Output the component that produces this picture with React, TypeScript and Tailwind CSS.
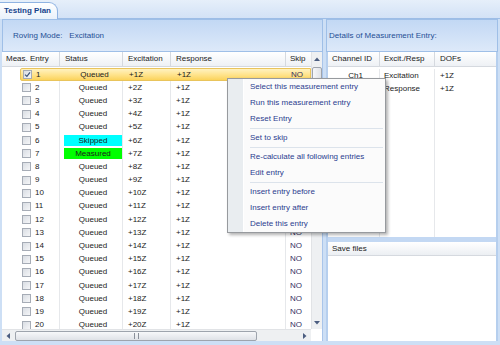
import React from "react";

type Entry = { id: number; status: string };

const entries: Entry[] = Array.from({ length: 20 }, (_, i) => ({
  id: i + 1,
  status: i === 5 ? "Skipped" : i === 6 ? "Measured" : "Queued",
}));

const menuGroups = [
  ["Select this measurement entry", "Run this measurement entry", "Reset Entry"],
  ["Set to skip"],
  ["Re-calculate all following entries", "Edit entry"],
  ["Insert entry before", "Insert entry after", "Delete this entry"],
];

function Checkbox({ checked }: { checked?: boolean }) {
  return (
    <div className="w-[9px] h-[9px] border border-[#a6acb6] bg-gradient-to-br from-[#d9dde3] to-[#f5f6f8] flex items-center justify-center">
      {checked && (
        <svg width="7" height="7" viewBox="0 0 7 7">
          <path d="M1 3.6 L2.9 5.4 L6 1.3" stroke="#3e5478" strokeWidth="1.2" fill="none" />
        </svg>
      )}
    </div>
  );
}

function Arrow({ dir }: { dir: "up" | "down" | "left" | "right" }) {
  const d =
    dir === "up"
      ? "M1 5 L4 1.5 L7 5 Z"
      : dir === "down"
      ? "M1 2 L4 5.5 L7 2 Z"
      : dir === "left"
      ? "M5 1 L1.5 4 L5 7 Z"
      : "M2 1 L5.5 4 L2 7 Z";
  return (
    <svg width="8" height="8" viewBox="0 0 8 8">
      <path d={d} fill="#4b5d80" />
    </svg>
  );
}

function EntryRow({ e }: { e: Entry }) {
  const sel = e.id === 1;
  const line = sel ? "" : "border-r border-[#e6e8eb]";
  const statusBg =
    e.status === "Skipped" ? "bg-[#00ffff]" : e.status === "Measured" ? "bg-[#00ff00]" : "";
  return (
    <div className="flex h-[13.2px] pl-[18px]">
      <div
        className={`flex flex-1 ${
          sel
            ? "rounded-l-[2px] border border-[#e9c45c] bg-gradient-to-b from-[#fff2c0] via-[#ffe48e] to-[#fbd35a]"
            : ""
        }`}
      >
        <div className={`w-[40px] flex items-center pl-[2px] gap-[4px] ${line}`}>
          <Checkbox checked={sel} />
          <span>{e.id}</span>
        </div>
        <div className={`w-[63px] flex items-center pl-[4px] ${line}`}>
          <div className={`w-full h-[11px] flex items-center justify-center ${statusBg}`}>
            {e.status}
          </div>
        </div>
        <div className={`w-[48px] flex items-center pl-[5px] ${line}`}>+{e.id}Z</div>
        <div className={`w-[115px] flex items-center pl-[5px] ${line}`}>+1Z</div>
        <div className="flex-1 flex items-center pl-[4px] text-[#35305f]">NO</div>
      </div>
    </div>
  );
}

function DetailRow({ ch, kind }: { ch: string; kind: string }) {
  return (
    <div className="flex h-[13.2px]">
      <div className="w-[52px] flex items-center justify-center pl-[4px] border-r border-[#e6e8eb]">{ch}</div>
      <div className="w-[55px] flex items-center pl-[4px] border-r border-[#e6e8eb]">{kind}</div>
      <div className="flex-1 flex items-center pl-[5px]">+1Z</div>
    </div>
  );
}

export default function App() {
  return (
    <div className="relative w-[500px] h-[345px] overflow-hidden bg-[#cddff5] text-[8px] leading-none text-[#1b1b1b] font-['Liberation_Sans',Arial,sans-serif]">
      {/* tab strip */}
      <div className="h-[19px] flex items-end bg-gradient-to-b from-[#e6effa] to-[#d3e2f6] border-b border-[#9dbde6]">
        <div className="h-[17px] w-[58px] pl-[4px] flex items-center rounded-tr-[9px] border-t border-r border-[#8fb3e2] bg-gradient-to-b from-white to-[#e9f1fb] font-bold text-[#15428b] -mb-px">
          Testing Plan
        </div>
      </div>

      <div className="flex h-[322px] px-[2px]">
        {/* left panel */}
        <div className="w-[321px] flex flex-col">
          <div className="h-[33px] flex items-center gap-[7px] pl-[10px] border border-[#9fbfe7] bg-gradient-to-b from-[#c2d8f4] to-[#dde9f9] text-[#1f4f95]">
            <span>Roving Mode:</span>
            <span>Excitation</span>
          </div>
          <div className="flex flex-1 min-h-0 bg-white border-r border-[#a9c5ea]">
            <div className="w-[309px] flex flex-col">
              <div className="h-[15px] flex border-b border-[#d5d9df] bg-gradient-to-b from-white to-[#eef1f5]">
                <div className="w-[58px] flex items-center pl-[4px] border-r border-[#d5d9df]">Meas. Entry</div>
                <div className="w-[63px] flex items-center pl-[5px] border-r border-[#d5d9df]">Status</div>
                <div className="w-[48px] flex items-center pl-[5px] border-r border-[#d5d9df]">Excitation</div>
                <div className="w-[115px] flex items-center pl-[5px] border-r border-[#d5d9df]">Response</div>
                <div className="flex-1 flex items-center pl-[4px]">Skip</div>
              </div>
              <div className="flex-1 overflow-hidden pt-[1px]">
                {entries.map((e) => (
                  <EntryRow key={e.id} e={e} />
                ))}
              </div>
            </div>
            {/* vertical scrollbar */}
            <div className="w-[11px] flex flex-col items-center bg-[#eef0f2] border-l border-[#e1e3e6]">
              <div className="h-[15px] flex items-center">
                <Arrow dir="up" />
              </div>
              <div className="w-[10px] h-[34px] rounded-[2px] border border-[#9ea4ad] bg-gradient-to-r from-[#f6f7f9] to-[#dfe2e7]" />
              <div className="flex-1" />
              <div className="h-[13px] flex items-center">
                <Arrow dir="down" />
              </div>
            </div>
          </div>
          {/* horizontal scrollbar */}
          <div className="h-[12px] flex bg-white border-r border-[#a9c5ea]">
            <div className="w-[309px] flex items-center bg-[#eef0f2] border-t border-[#e1e3e6]">
              <div className="w-[13px] flex justify-center">
                <Arrow dir="left" />
              </div>
              <div className="w-[242px] h-[10px] rounded-[2px] border border-[#9ea4ad] bg-gradient-to-b from-[#f7f8fa] to-[#dfe2e7] flex items-center justify-center">
                <div className="w-[5px] h-[6px] border-x border-[#8a909a]" />
              </div>
              <div className="flex-1" />
              <div className="w-[13px] flex justify-center">
                <Arrow dir="right" />
              </div>
            </div>
            <div className="flex-1 bg-white" />
          </div>
        </div>

        {/* right panel */}
        <div className="ml-[3px] w-[172px] flex flex-col">
          <div className="h-[33px] flex items-center pl-[2px] border border-[#9fbfe7] bg-gradient-to-b from-[#c2d8f4] to-[#dde9f9] text-[#1f4f95]">
            Details of Measurement Entry:
          </div>
          <div className="flex-1 flex flex-col border-x-2 border-[#b6cfee]">
            <div className="h-[15px] flex border-b border-[#d5d9df] bg-gradient-to-b from-white to-[#eef1f5]">
              <div className="w-[52px] flex items-center pl-[4px] border-r border-[#d5d9df]">Channel ID</div>
              <div className="w-[55px] flex items-center pl-[4px] border-r border-[#d5d9df]">Excit./Resp</div>
              <div className="flex-1 flex items-center pl-[5px]">DOFs</div>
            </div>
            <div className="h-[170px] flex flex-col bg-white pt-[2px]">
              <DetailRow ch="Ch1" kind="Excitation" />
              <DetailRow ch="" kind="Response" />
              <div className="flex flex-1">
                <div className="w-[52px] border-r border-[#e6e8eb]" />
                <div className="w-[55px] border-r border-[#e6e8eb]" />
              </div>
            </div>
            <div className="h-[5px] bg-[#c3d8f3]" />
            <div className="h-[14px] flex items-center pl-[4px] border-b border-[#d5d9df] bg-gradient-to-b from-white to-[#eceff3]">
              Save files
            </div>
            <div className="flex-1 bg-white" />
          </div>
        </div>
      </div>

      {/* context menu */}
      <div className="absolute left-[227px] top-[78px] w-[159px] flex border border-[#979a9e] bg-[#fbfbfb] shadow-[2px_2px_3px_rgba(0,0,0,0.3)] text-[#2b3d8f]">
        <div className="w-[16px] bg-[#e9edf0] border-r border-white" />
        <div className="flex-1 flex flex-col">
          {menuGroups.map((g, gi) => (
            <div key={gi} className="flex flex-col">
              {gi > 0 && (
                <div className="h-[3px] flex items-center pl-[6px] pr-[2px]">
                  <div className="h-px w-full bg-[#dce3eb]" />
                </div>
              )}
              {g.map((item) => (
                <div key={item} className="h-[16px] flex items-center pl-[6px]">
                  {item}
                </div>
              ))}
            </div>
          ))}
        </div>
      </div>
    </div>
  );
}
